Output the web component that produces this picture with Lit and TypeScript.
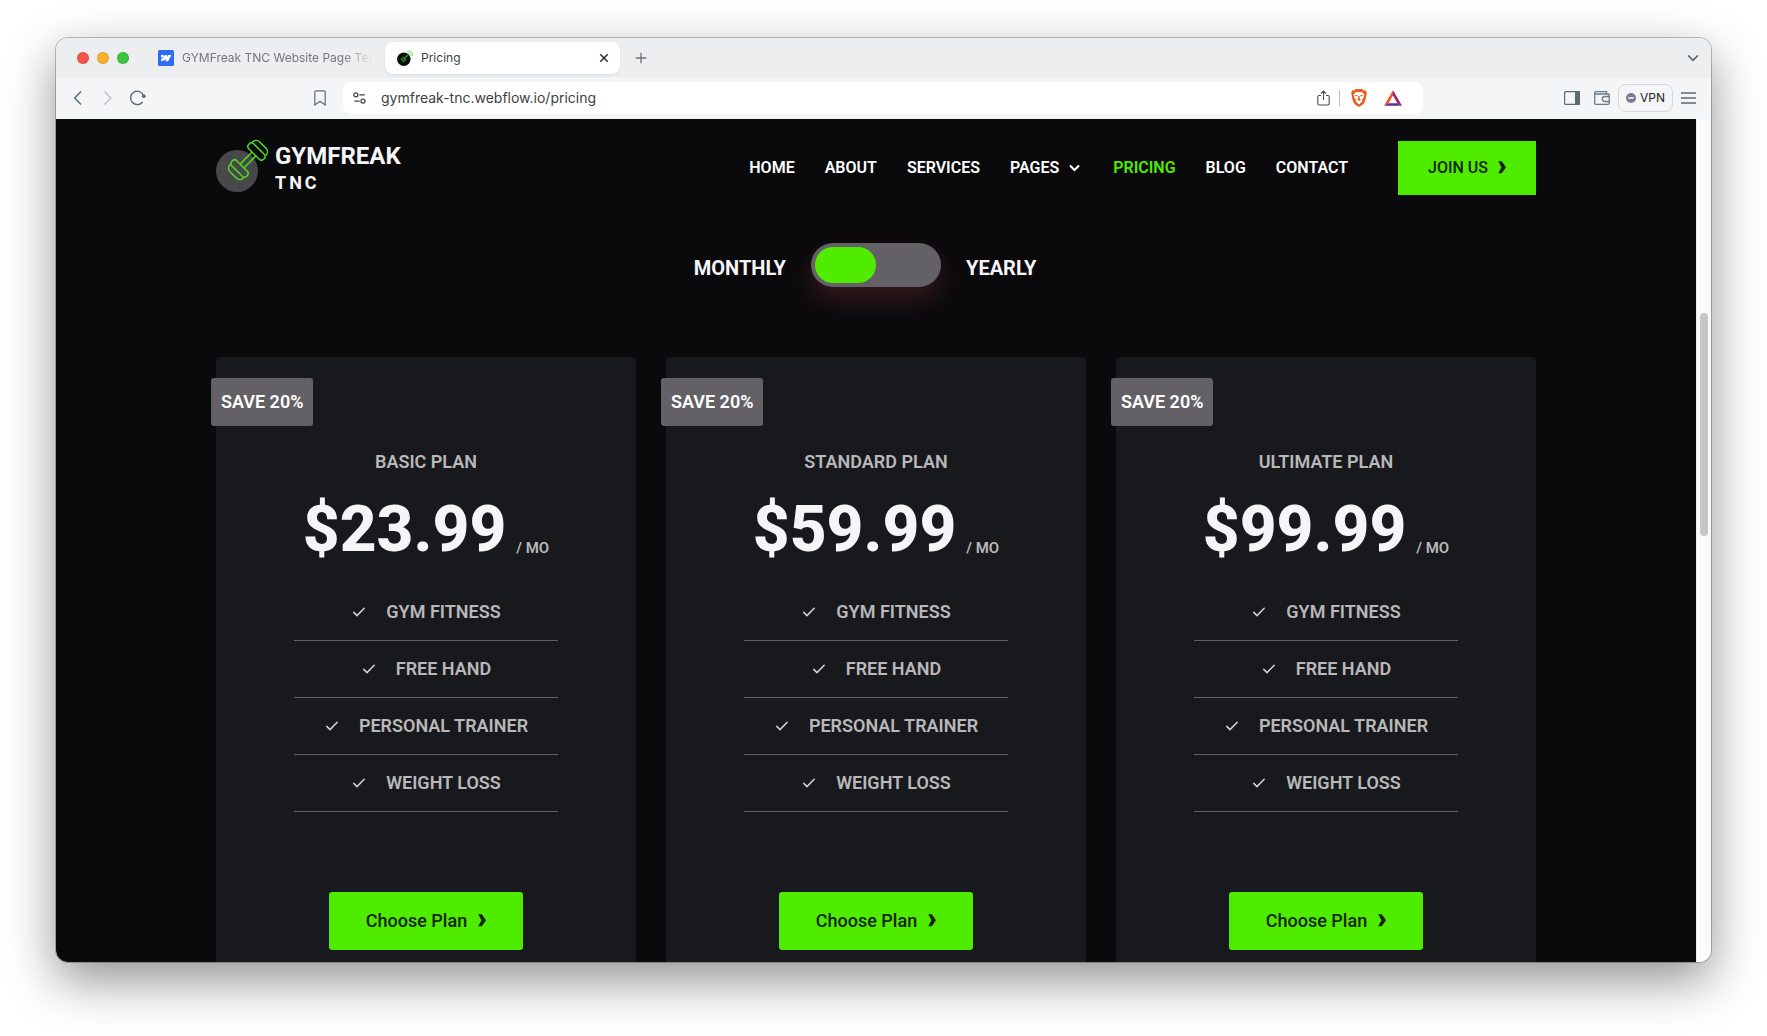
import { LitElement, html, css, svg } from "lit";
import { customElement, property, state } from "lit/decorators.js";

const chevronRight = html`<svg width="8" height="14" viewBox="0 0 8 14" aria-hidden="true">
  <path d="M0.200 0.200H3.800L8 6.200L3.800 12.200H0.200L3.500 6.200Z" fill="currentColor" />
</svg>`;

const plate = svg`<path d="M-12-10.500h.500a3 3 0 0 1 3 3v15a3 3 0 0 1-3 3h-1a3 3 0 0 1-3-3v-15a3 3 0 0 1 3-3Z" />
  <path d="M-15.500-9.500c-3 0-5.500 2-5.500 5v9c0 3 2.500 5 5.500 5" />`;

@customElement("plan-card")
export class PlanCard extends LitElement {
  @property() name = "";
  @property() price = "";

  static styles = css`
    :host {
      display: flex;
      flex-direction: column;
      align-items: center;
      position: relative;
      background: #18191c;
      border-radius: 4px;
      padding: 91px 0 60px;
      color: #b8b8ba;
      font-weight: 600;
      font-size: 18px;
      line-height: 28px;
    }
    .badge {
      position: absolute;
      left: -5px;
      top: 21px;
      padding: 10px;
      background: #636166;
      color: #fff;
      border-radius: 3px;
    }
    .name {
      margin: 0;
      font-size: inherit;
      font-weight: 600;
    }
    .amount {
      display: flex;
      align-items: flex-end;
      gap: 10px;
      margin: 12px 0;
    }
    .value {
      color: #f5f5f7;
      font-size: 64px;
      line-height: 84px;
      font-weight: 800;
    }
    .per {
      font-size: 15px;
      line-height: 48px;
    }
    ul {
      list-style: none;
      align-self: stretch;
      margin: 0 78px;
      padding: 0;
    }
    li {
      display: flex;
      align-items: center;
      justify-content: center;
      gap: 21px;
      padding: 14px 0 14px 2px;
      border-bottom: 1px solid #636166;
    }
    .choose {
      display: flex;
      align-items: center;
      gap: 11px;
      margin-top: 80px;
      padding: 15px 37px;
      border: 0;
      border-radius: 3px;
      background: #50ec00;
      color: #14240a;
      font: 500 18px/28px Roboto, sans-serif;
    }
  `;

  render() {
    const features = ["GYM FITNESS", "FREE HAND", "PERSONAL TRAINER", "WEIGHT LOSS"];
    return html`
      <div class="badge">SAVE 20%</div>
      <h2 class="name">${this.name}</h2>
      <div class="amount"><span class="value">${this.price}</span><span class="per">/ MO</span></div>
      <ul>
        ${features.map(
          (f) => html`<li>
            <svg width="12" height="10" viewBox="0 0 12 10" fill="none" stroke="#d4d4d6" stroke-width="1.5" stroke-linecap="round" aria-hidden="true">
              <path d="M0.800 5.400L4 8.600L11.200 1.200" />
            </svg>${f}
          </li>`
        )}
      </ul>
      <button class="choose">Choose Plan ${chevronRight}</button>
    `;
  }
}

@customElement("app-root")
export class AppRoot extends LitElement {
  @state() private yearly = false;

  static styles = css`
    * {
      box-sizing: border-box;
    }
    :host {
      display: flex;
      height: 100vh;
      box-sizing: border-box;
      padding: 38px 56px 74px;
      background: #fff;
      font-family: Roboto, sans-serif;
    }
    button {
      border: 0;
      background: none;
      padding: 0;
      font: inherit;
      color: inherit;
      display: flex;
      align-items: center;
      justify-content: center;
    }
    a {
      color: inherit;
      text-decoration: none;
    }
    svg {
      display: block;
      flex: none;
    }
    .window {
      flex: 1;
      min-width: 0;
      display: flex;
      flex-direction: column;
      border-radius: 12px;
      overflow: hidden;
      background: #f3f5f7;
      box-shadow: 0 0 0 1px rgba(0, 0, 0, 0.24), 0 18px 50px rgba(0, 0, 0, 0.44);
      color: #3c3f44;
      font-family: Inter, sans-serif;
    }

    /* tab strip */
    .tabs {
      display: flex;
      align-items: center;
      height: 40px;
      flex: none;
      background: #edeef0;
      padding: 0 12px 0 21px;
      font-size: 12px;
      line-height: 16px;
    }
    .lights {
      display: flex;
      gap: 8px;
      margin-right: 29px;
    }
    .light {
      width: 12px;
      height: 12px;
      border-radius: 50%;
      border: 1px solid rgba(0, 0, 0, 0.1);
    }
    .red { background: #f5544d; }
    .amber { background: #fbb42a; }
    .green { background: #3ec43c; }
    .tab {
      display: flex;
      align-items: center;
      gap: 8px;
      height: 32px;
      border-radius: 8px;
    }
    .idle {
      color: #74777b;
      margin-right: 12px;
      white-space: nowrap;
    }
    .idle span {
      width: 191px;
      -webkit-mask-image: linear-gradient(90deg, #000 84%, transparent);
      mask-image: linear-gradient(90deg, #000 84%, transparent);
    }
    .active {
      background: #fff;
      width: 235px;
      padding: 0 11px 0 12px;
      box-shadow: 0 1px 3px rgba(0, 0, 0, 0.08);
    }
    .active span {
      flex: 1;
    }
    .new {
      margin-left: 15px;
    }
    .more {
      margin-left: auto;
    }

    /* toolbar */
    .bar {
      display: flex;
      align-items: center;
      height: 41px;
      flex: none;
      padding: 0 15px 2px;
      color: #5b6b76;
    }
    .bar .left {
      width: 272px;
      display: flex;
      align-items: center;
      gap: 14px;
      padding-right: 17px;
    }
    .bookmark {
      margin-left: auto;
    }
    .address {
      flex: 1;
      display: flex;
      align-items: center;
      height: 32px;
      background: #fff;
      border-radius: 8px;
      padding: 0 21px 0 10px;
      color: #4a4d52;
    }
    .address input {
      flex: 1;
      min-width: 0;
      border: 0;
      outline: 0;
      padding: 0 15px;
      background: none;
      color: #3c3f44;
      font: 14px/20px Inter, sans-serif;
    }
    .rule {
      width: 1px;
      height: 16px;
      background: #b9bcc0;
      margin: 0 11px 0 9px;
    }
    .bat {
      margin-left: 17px;
    }
    .bar .right {
      width: 273px;
      display: flex;
      align-items: center;
      justify-content: flex-end;
    }
    .wallet {
      margin: 0 8px 0 14px;
    }
    .vpn {
      gap: 4px;
      width: 55px;
      height: 28px;
      margin-right: 8px;
      border: 1px solid #d5d9dd;
      border-radius: 8px;
      color: #1d1f24;
      font-size: 12px;
    }

    /* viewport */
    .view {
      flex: 1;
      min-height: 0;
      display: flex;
      background: #fafafb;
    }
    .page {
      flex: 1;
      min-width: 0;
      overflow: hidden;
      background: #0a0a0c;
      color: #fff;
      font-family: Roboto, sans-serif;
    }
    .track {
      width: 15px;
      padding: 0 3px 0 3px;
      border-left: 1px solid #ededee;
    }
    .thumb {
      height: 223px;
      margin-top: 194px;
      border-radius: 4px;
      background: #c6c6c7;
    }
    .wrap {
      max-width: 1320px;
      margin: 0 auto;
    }
    .head {
      display: flex;
      align-items: center;
      height: 98px;
    }
    .logo {
      display: flex;
      align-items: center;
      gap: 5px;
      font-weight: 700;
      color: #f5f5f7;
    }
    .mark {
      margin-bottom: 6px;
    }
    .brand {
      display: flex;
      flex-direction: column;
      padding-top: 2px;
      font-size: 24px;
      line-height: 28px;
    }
    .sub {
      font-size: 18px;
      line-height: 26px;
      letter-spacing: 3px;
    }
    nav {
      display: flex;
      gap: 30px;
      margin-left: auto;
      margin-right: 50px;
      font-size: 16px;
      line-height: 24px;
      font-weight: 600;
    }
    nav a {
      display: flex;
      align-items: center;
      gap: 10px;
    }
    .current {
      color: #50ec00;
    }
    .down {
      margin-right: 3px;
    }
    .join {
      display: flex;
      align-items: center;
      gap: 10px;
      padding: 15px 30px;
      background: #50ec00;
      color: #14240a;
      font-size: 16px;
      line-height: 24px;
      font-weight: 500;
    }
    .billing {
      display: grid;
      grid-template-columns: 1fr auto 1fr;
      align-items: center;
      column-gap: 25px;
      padding: 26px 0 70px;
      font-size: 20px;
      line-height: 28px;
      font-weight: 700;
      color: #f5f5f7;
    }
    .billing .month {
      text-align: right;
      padding-top: 5px;
    }
    .billing .year {
      padding-top: 5px;
    }
    .switch {
      appearance: none;
      margin: 0;
      width: 130px;
      height: 44px;
      padding: 4px;
      border-radius: 22px;
      background: #636166;
      box-shadow: 0 12px 26px rgba(160, 60, 75, 0.3);
      display: flex;
    }
    .switch::before {
      content: "";
      width: 61px;
      height: 36px;
      border-radius: 18px;
      background: #50ec00;
    }
    .switch:checked {
      justify-content: flex-end;
    }
    .plans {
      display: grid;
      grid-template-columns: repeat(3, 1fr);
      gap: 30px;
    }
  `;

  render() {
    return html`
      <div class="window">
        <div class="tabs">
          <div class="lights"><i class="light red"></i><i class="light amber"></i><i class="light green"></i></div>
          <div class="tab idle">
            <svg width="16" height="16" viewBox="0 0 16 16" aria-hidden="true">
              <rect width="16" height="16" rx="1.500" fill="#2d6cf6" />
              <path d="M13.400 5L10.200 11.200H7.200L8.500 8.600C7.400 10.100 5.800 11 3.200 11.200V8.700C4.800 8.600 5.700 7.800 6 7.400H3V5H5.800V7L7 5H9V7L10.300 5Z" fill="#fff" />
            </svg>
            <span>GYMFreak TNC Website Page Tem</span>
          </div>
          <div class="tab active">
            <svg width="16" height="16" viewBox="0 0 16 16" fill="none" aria-hidden="true">
              <circle cx="6.800" cy="9.300" r="6.700" fill="#0a0f0a" />
              <path d="M4 8.500L7.500 12M5.500 7L9 10.500M6.500 9.500L11 5" stroke="#238c22" stroke-width="1.500" />
              <path d="M9.800 2.300C11-.4 16.800 2.200 15 6M11.200 2.800L14 5.800" stroke="#8ee59a" stroke-width="1.300" />
            </svg>
            <span>Pricing</span>
            <button aria-label="Close tab">
              <svg width="10" height="10" viewBox="0 0 10 10" stroke="#303338" stroke-width="1.600"><path d="M1.300 1.300L8.700 8.700M8.700 1.300L1.300 8.700" /></svg>
            </button>
          </div>
          <button class="new" aria-label="New tab">
            <svg width="12" height="12" viewBox="0 0 12 12" stroke="#6c7075" stroke-width="1.300"><path d="M6 .8V11.200M.8 6H11.200" /></svg>
          </button>
          <button class="more" aria-label="Search tabs">
            <svg width="12" height="12" viewBox="0 0 12 12" fill="none" stroke="#52616b" stroke-width="1.700"><path d="M1.200 3.500L6 8.300L10.800 3.500" /></svg>
          </button>
        </div>

        <div class="bar">
          <div class="left">
            <button aria-label="Back">
              <svg width="14" height="16" viewBox="0 0 14 16" fill="none" stroke="#5b6b76" stroke-width="1.500"><path d="M10 1.500L3.700 8L10 14.500" /></svg>
            </button>
            <button aria-label="Forward">
              <svg width="16" height="16" viewBox="0 0 16 16" fill="none" stroke="#bcc4ca" stroke-width="1.500"><path d="M5.500 1.500L11.800 8L5.500 14.500" /></svg>
            </button>
            <button aria-label="Reload">
              <svg width="18" height="18" viewBox="0 0 18 18" fill="none" stroke="#5b6b76" stroke-width="1.400">
                <path d="M13.600 13A6.700 6.700 0 1 1 14.600 6.600" /><circle cx="14.800" cy="7.200" r="1.900" fill="#5b6b76" stroke="none" />
              </svg>
            </button>
            <button class="bookmark" aria-label="Bookmark">
              <svg width="12" height="16" viewBox="0 0 12 16" fill="none" stroke="#5b6b76" stroke-width="1.200"><path d="M.8 2.300Q.8 .8 2.300 .8H9.700Q11.200 .8 11.200 2.300V15L6 11.200L.8 15Z" /></svg>
            </button>
          </div>
          <div class="address">
            <svg width="13" height="12" viewBox="0 0 13 12" fill="none" stroke="#44474c" stroke-width="1.300" aria-hidden="true">
              <circle cx="2.800" cy="2.900" r="2" /><path d="M6.300 2.900H11.800M1.300 9.100H6.700" /><circle cx="10" cy="9.100" r="2" />
            </svg>
            <input aria-label="Address" .value=${"gymfreak-tnc.webflow.io/pricing"} />
            <button aria-label="Share">
              <svg width="13" height="16" viewBox="0 0 13 16" fill="none" stroke="#44474c" stroke-width="1.100">
                <path d="M4 5.500H2.200Q.8 5.500 .8 6.900V13.600Q.8 15 2.200 15H10.800Q12.200 15 12.200 13.600V6.900Q12.200 5.500 10.800 5.500H9M6.500 10V1.200M3.900 3.600L6.500 1L9.100 3.600" />
              </svg>
            </button>
            <i class="rule"></i>
            <button aria-label="Brave Shields">
              <svg width="16" height="18" viewBox="0 0 16 18">
                <path d="M4.800 0H11.200L12.600 1.500L14.700 1.300L15.900 4L15.400 5.800C15 9 14.200 12.700 13 14.300C11.700 15.800 9.300 17.400 8 18C6.700 17.400 4.300 15.800 3 14.300C1.800 12.700 1 9 .6 5.800L.1 4L1.300 1.300L3.400 1.500Z" fill="#ea5a20" />
                <path d="M8 3.200L10.600 2.700L13.300 5.200L12.700 8.400L11 10.800L11.300 12.300L8 15.400L4.700 12.300L5 10.800L3.300 8.400L2.700 5.200L5.400 2.700Z" fill="#fff" />
                <path d="M4.200 5.800L7 6.600L6.400 7.600L4.400 7ZM11.800 5.800L9 6.600L9.600 7.600L11.600 7ZM7.400 7H8.600L8.900 10L10 10.600L8 12L6 10.600L7.100 10Z" fill="#ea5a20" />
              </svg>
            </button>
            <button class="bat" aria-label="Rewards">
              <svg width="18" height="16" viewBox="0 0 18 16">
                <path d="M9 .2L0 15.800L4.600 13.200L9 5.600Z" fill="#f1562b" />
                <path d="M9 .2L18 15.800L13.400 13.200L9 5.600Z" fill="#9e1f63" />
                <path d="M0 15.800H18L13.400 13.200H4.600Z" fill="#662d91" />
              </svg>
            </button>
          </div>
          <div class="right">
            <button aria-label="Sidebar">
              <svg width="16" height="14" viewBox="0 0 16 14"><rect x=".6" y=".6" width="14.800" height="12.800" rx="1" fill="none" stroke="#5b6b76" stroke-width="1.200" /><path d="M11 0H15Q16 0 16 1V13Q16 14 15 14H11Z" fill="#5b6b76" /></svg>
            </button>
            <button class="wallet" aria-label="Wallet">
              <svg width="16" height="14" viewBox="0 0 16 14" fill="none" stroke="#6b7a84" stroke-width="1.300">
                <path d="M15.200 5V3.800Q15.200 3 14.200 3H2Q.7 3 .7 1.900Q.7 .7 2 .7H12.500V3M.7 2V12Q.7 13.300 2 13.300H14Q15.200 13.300 15.200 12V10.800M15.300 5.500H10.800A2.500 2.500 0 0 0 10.800 10.500H15.300Z" />
              </svg>
            </button>
            <button class="vpn">
              <svg width="10" height="10" viewBox="0 0 10 10" aria-hidden="true"><circle cx="5" cy="5" r="5" fill="#7a7891" /><path d="M2.200 5H7.800" stroke="#fff" stroke-width="1.400" /></svg>
              VPN
            </button>
            <button aria-label="Menu">
              <svg width="15" height="12" viewBox="0 0 15 12" stroke="#5b6b76" stroke-width="1.300"><path d="M0 1H15M0 6H15M0 11H15" /></svg>
            </button>
          </div>
        </div>

        <div class="view">
          <main class="page">
            <header class="wrap head">
              <a class="logo" href="#home">
                <svg class="mark" width="54" height="54" viewBox="0 0 54 54" fill="none" aria-hidden="true">
                  <circle cx="21" cy="33" r="21" fill="#48484b" />
                  <g transform="translate(32 22) rotate(-45)" stroke="#4fdc1c" stroke-width="1.500">
                    <path d="M-8.500-2.700H8.500M-8.500 2.700H8.500" />
                    ${plate}
                    <g transform="rotate(180)">${plate}</g>
                  </g>
                </svg>
                <span class="brand">GYMFREAK<span class="sub">TNC</span></span>
              </a>
              <nav>
                <a href="#home">HOME</a>
                <a href="#about">ABOUT</a>
                <a href="#services">SERVICES</a>
                <a href="#pages">PAGES
                  <svg class="down" width="11" height="8" viewBox="0 0 11 8" fill="none" stroke="#fff" stroke-width="2"><path d="M1 1.500L5.500 6L10 1.500" /></svg>
                </a>
                <a class="current" href="#pricing">PRICING</a>
                <a href="#blog">BLOG</a>
                <a href="#contact">CONTACT</a>
              </nav>
              <a class="join" href="#join">JOIN US ${chevronRight}</a>
            </header>
            <section class="wrap">
              <div class="billing">
                <label class="month" for="cycle">MONTHLY</label>
                <input class="switch" id="cycle" type="checkbox" role="switch" .checked=${this.yearly}
                  @change=${(e: Event) => (this.yearly = (e.target as HTMLInputElement).checked)} />
                <label class="year" for="cycle">YEARLY</label>
              </div>
              <div class="plans">
                <plan-card name="BASIC PLAN" price="$23.99"></plan-card>
                <plan-card name="STANDARD PLAN" price="$59.99"></plan-card>
                <plan-card name="ULTIMATE PLAN" price="$99.99"></plan-card>
              </div>
            </section>
          </main>
          <div class="track"><div class="thumb"></div></div>
        </div>
      </div>
    `;
  }
}
